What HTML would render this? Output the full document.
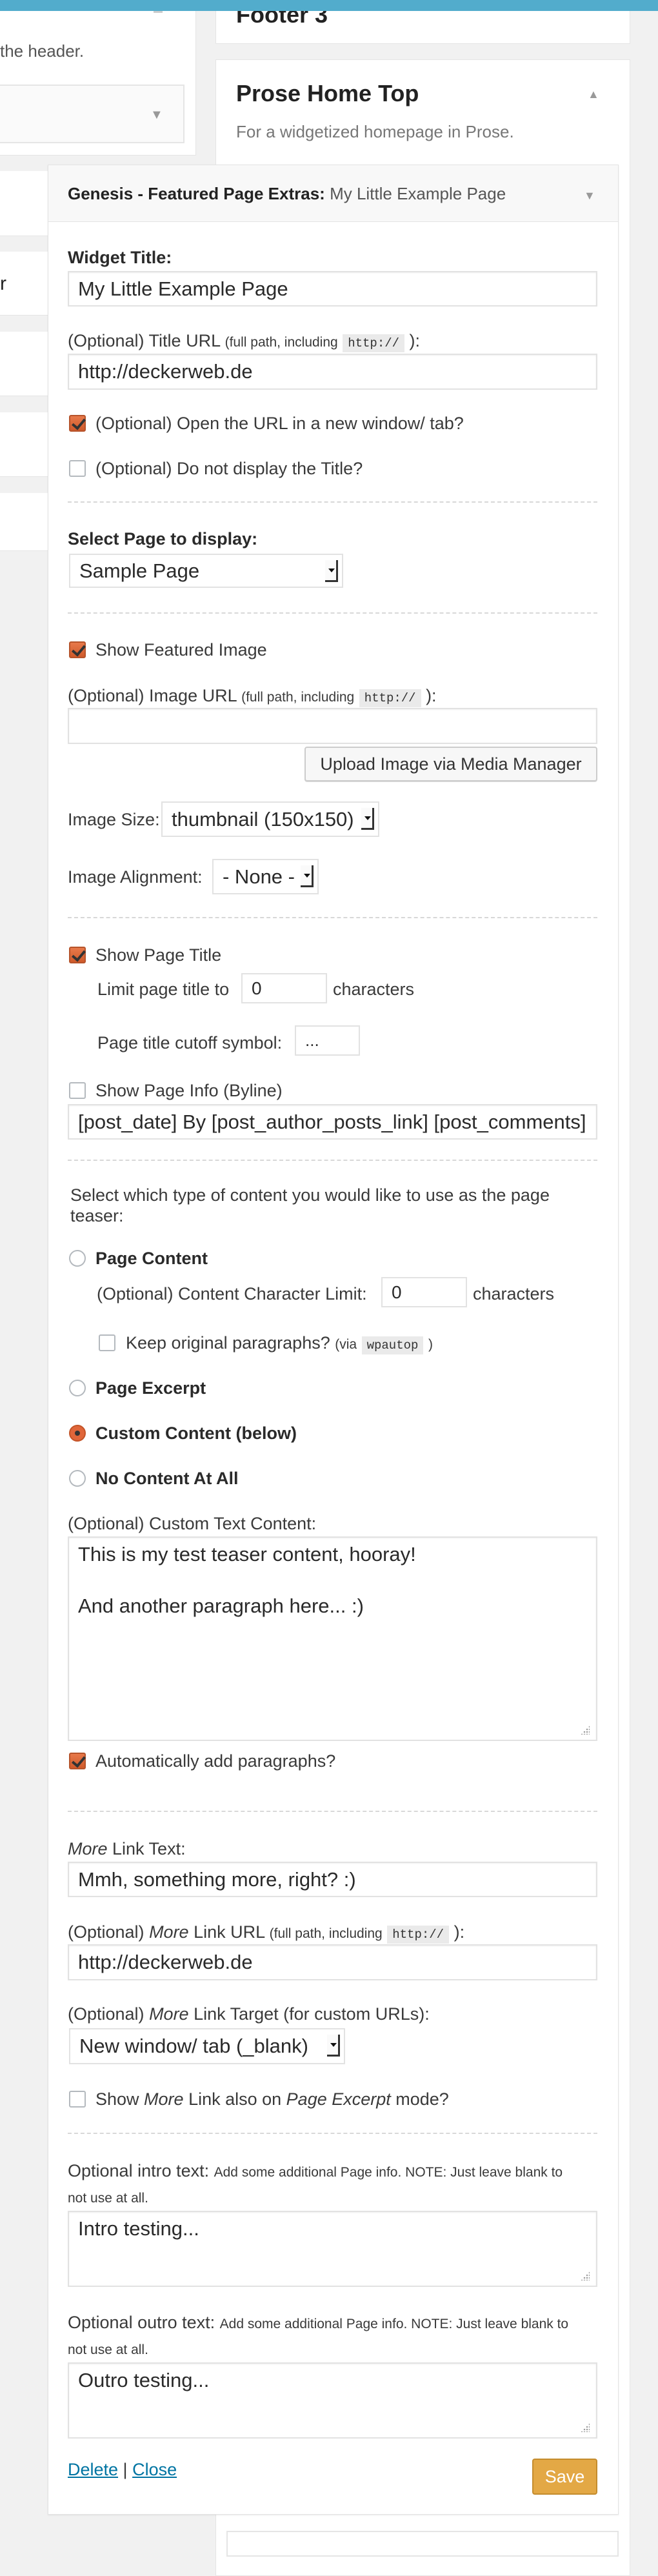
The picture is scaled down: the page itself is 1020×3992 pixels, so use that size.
<!DOCTYPE html>
<html><head><meta charset="utf-8"><style>
*{margin:0;padding:0;box-sizing:border-box}
body{width:1020px;height:3935px;background:#f1f1f1;position:relative;overflow:hidden;font-family:"Liberation Sans",Arial,sans-serif;color:#3a3a3a}
.a{position:absolute}
.t{position:absolute;font-size:27px;line-height:40px;white-space:nowrap;color:#3a3a3a}
.b{font-weight:bold;color:#2a2a2a}
.sm{font-size:21px}
code{font-family:"Liberation Mono",monospace;font-size:19px;background:#eaeaea;padding:3px 8px;color:#333}
.in{position:absolute;left:105px;width:821px;background:#fff;border:2px solid #e2e2e2;box-shadow:inset 0 1px 2px rgba(0,0,0,.07);font-size:31px;color:#2a2a2a;padding-left:14px;display:flex;align-items:center;white-space:nowrap;overflow:hidden}
.ta{align-items:flex-start;line-height:40px;padding-top:6px;display:block}
.sel{position:absolute;background:#fff;border:2px solid #e2e2e2;font-size:31px;color:#2a2a2a;padding-left:14px;display:flex;align-items:center;white-space:nowrap}
.arr{position:absolute;right:6px;top:8px;width:20px;height:34px;border-right:3px solid #333;border-bottom:3px solid #333;background:#fafafa}
.arr:after{content:"";position:absolute;left:5px;top:13px;border-left:5px solid transparent;border-right:5px solid transparent;border-top:6px solid #111}
.cb{position:absolute;left:107px;width:26px;height:26px;border:2px solid #b4b9be;border-radius:3px;background:#fff}
.cbk{background:linear-gradient(#e8794a,#cf5a2b);border-color:#b6532a}
.cbk:after{content:"";position:absolute;left:7px;top:0px;width:8px;height:16px;border-right:4px solid #333;border-bottom:4px solid #333;transform:rotate(40deg)}
.rd{position:absolute;left:107px;width:26px;height:26px;border:2px solid #b4b9be;border-radius:50%;background:#fff}
.rdk{background:#e0663a;border-color:#c45428}
.rdk:after{content:"";position:absolute;left:7px;top:7px;width:8px;height:8px;border-radius:50%;background:#333}
.dash{position:absolute;left:105px;width:821px;height:0;border-top:2px dashed #d8d8d8}
.grip{position:absolute;right:10px;bottom:8px;width:14px;height:14px;background:radial-gradient(circle,#999 1px,transparent 1.5px) 0 0/4px 4px;clip-path:polygon(100% 0,100% 100%,0 100%)}
</style></head><body>

<!-- left column -->
<div class="a" style="left:0;top:0;width:304px;height:241px;background:#fff;border-right:1px solid #e5e5e5;border-bottom:1px solid #e5e5e5"></div>
<div class="a" style="left:238px;top:6px;width:14px;height:14px;background:#ccc"></div>
<div class="t" style="left:0;top:59px;font-size:26px;color:#555">the header.</div>
<div class="a" style="left:-2px;top:131px;width:288px;height:91px;background:#fafafa;border:2px solid #e5e5e5"></div>
<div class="t" style="left:233px;top:158px;font-size:20px;color:#999">▼</div>
<div class="a" style="left:0;top:265px;width:80px;height:101px;background:#fff;border-bottom:1px solid #e5e5e5"></div>
<div class="a" style="left:0;top:390px;width:80px;height:99px;background:#fff;border-bottom:1px solid #e5e5e5"></div>
<div class="t" style="left:0;top:420px;font-size:30px;color:#222">r</div>
<div class="a" style="left:0;top:514px;width:80px;height:100px;background:#fff;border-bottom:1px solid #e5e5e5"></div>
<div class="a" style="left:0;top:639px;width:80px;height:100px;background:#fff;border-bottom:1px solid #e5e5e5"></div>
<div class="a" style="left:0;top:764px;width:80px;height:90px;background:#fff;border-bottom:1px solid #e5e5e5"></div>

<!-- right column -->
<div class="a" style="left:334px;top:0;width:643px;height:68px;background:#fff;border:1px solid #e5e5e5"></div>
<div class="t b" style="left:366px;top:3px;font-size:36px;color:#222">Footer 3</div>
<div class="a" style="left:334px;top:92px;width:643px;height:3900px;background:#fff;border:1px solid #e5e5e5"></div>
<div class="t b" style="left:366px;top:122px;font-size:36px;line-height:46px;color:#222">Prose Home Top</div>
<div class="t" style="left:911px;top:126px;font-size:18px;color:#999">▲</div>
<div class="t" style="left:366px;top:184px;font-size:26px;color:#777">For a widgetized homepage in Prose.</div>
<div class="a" style="left:351px;top:3922px;width:608px;height:40px;background:#fff;border:2px solid #e5e5e5"></div>

<div class="a" style="left:0;top:0;width:1020px;height:17px;background:#52accc"></div>

<!-- panel -->
<div class="a" style="left:74px;top:255px;width:885px;height:3642px;background:#fff;border:1px solid #e3e3e3;box-shadow:0 1px 2px rgba(0,0,0,.08)"></div>
<div class="a" style="left:74px;top:255px;width:885px;height:89px;background:#f8f8f8;border:1px solid #e3e3e3"></div>
<div class="t" style="left:105px;top:280px;font-size:26px;color:#222"><b>Genesis - Featured Page Extras:</b> <span style="color:#555">My Little Example Page</span></div>
<div class="t" style="left:905px;top:283px;font-size:18px;color:#999">▼</div>

<div class="t b" style="left:105px;top:379px">Widget Title:</div>
<div class="in" style="top:420px;height:55px">My Little Example Page</div>
<div class="t" style="left:105px;top:508px">(Optional) Title URL <span class="sm">(full path, including</span> <code>http://</code> ):</div>
<div class="in" style="top:548px;height:56px">http://deckerweb.de</div>
<div class="cb cbk" style="top:643px"></div><div class="t" style="left:148px;top:636px">(Optional) Open the URL in a new window/ tab?</div>
<div class="cb" style="top:713px"></div><div class="t" style="left:148px;top:706px">(Optional) Do not display the Title?</div>
<div class="dash" style="top:777px"></div>

<div class="t b" style="left:105px;top:815px">Select Page to display:</div>
<div class="sel" style="left:107px;top:858px;width:425px;height:53px">Sample Page<span class="arr"></span></div>
<div class="dash" style="top:949px"></div>

<div class="cb cbk" style="top:994px"></div><div class="t" style="left:148px;top:987px">Show Featured Image</div>
<div class="t" style="left:105px;top:1058px">(Optional) Image URL <span class="sm">(full path, including</span> <code>http://</code> ):</div>
<div class="in" style="top:1097px;height:56px"></div>
<div class="a" style="left:472px;top:1157px;width:454px;height:54px;background:#f7f7f7;border:2px solid #ccc;border-radius:4px;box-shadow:0 1px 0 #ddd;font-size:27px;line-height:50px;text-align:center;color:#333">Upload Image via Media Manager</div>

<div class="t" style="left:105px;top:1250px">Image Size:</div>
<div class="sel" style="left:250px;top:1242px;width:338px;height:55px">thumbnail (150x150)<span class="arr"></span></div>
<div class="t" style="left:105px;top:1339px">Image Alignment:</div>
<div class="sel" style="left:329px;top:1331px;width:165px;height:55px">- None -<span class="arr"></span></div>
<div class="dash" style="top:1421px"></div>

<div class="cb cbk" style="top:1467px"></div><div class="t" style="left:148px;top:1460px">Show Page Title</div>
<div class="t" style="left:151px;top:1513px">Limit page title to</div>
<div class="sel" style="left:374px;top:1508px;width:133px;height:47px;font-size:28px">0</div>
<div class="t" style="left:516px;top:1513px">characters</div>
<div class="t" style="left:151px;top:1596px">Page title cutoff symbol:</div>
<div class="sel" style="left:457px;top:1589px;width:101px;height:47px;font-size:26px">...</div>
<div class="cb" style="top:1677px"></div><div class="t" style="left:148px;top:1670px">Show Page Info (Byline)</div>
<div class="in" style="top:1711px;height:55px">[post_date] By [post_author_posts_link] [post_comments]</div>
<div class="dash" style="top:1797px"></div>

<div class="t" style="left:109px;top:1832px">Select which type of content you would like to use as the page</div>
<div class="t" style="left:109px;top:1864px">teaser:</div>
<div class="rd" style="top:1937px"></div><div class="t b" style="left:148px;top:1930px">Page Content</div>
<div class="t" style="left:150px;top:1985px">(Optional) Content Character Limit:</div>
<div class="sel" style="left:591px;top:1979px;width:133px;height:47px;font-size:28px">0</div>
<div class="t" style="left:733px;top:1985px">characters</div>
<div class="cb" style="left:153px;top:2068px"></div><div class="t" style="left:195px;top:2061px">Keep original paragraphs? <span class="sm">(via</span> <code>wpautop</code> <span class="sm">)</span></div>
<div class="rd" style="top:2138px"></div><div class="t b" style="left:148px;top:2131px">Page Excerpt</div>
<div class="rd rdk" style="top:2208px"></div><div class="t b" style="left:148px;top:2201px">Custom Content (below)</div>
<div class="rd" style="top:2278px"></div><div class="t b" style="left:148px;top:2271px">No Content At All</div>
<div class="t" style="left:105px;top:2341px">(Optional) Custom Text Content:</div>
<div class="in ta" style="top:2381px;height:317px">This is my test teaser content, hooray!<br><br>And another paragraph here... :)<span class="grip"></span></div>
<div class="cb cbk" style="top:2716px"></div><div class="t" style="left:148px;top:2709px">Automatically add paragraphs?</div>
<div class="dash" style="top:2806px"></div>

<div class="t" style="left:105px;top:2845px"><i>More</i> Link Text:</div>
<div class="in" style="top:2885px;height:55px">Mmh, something more, right? :)</div>
<div class="t" style="left:105px;top:2974px">(Optional) <i>More</i> Link URL <span class="sm">(full path, including</span> <code>http://</code> ):</div>
<div class="in" style="top:3013px;height:56px">http://deckerweb.de</div>
<div class="t" style="left:105px;top:3101px">(Optional) <i>More</i> Link Target (for custom URLs):</div>
<div class="sel" style="left:107px;top:3143px;width:428px;height:56px">New window/ tab (_blank)<span class="arr"></span></div>
<div class="cb" style="top:3240px"></div><div class="t" style="left:148px;top:3233px">Show <i>More</i> Link also on <i>Page Excerpt</i> mode?</div>
<div class="dash" style="top:3305px"></div>

<div class="t" style="left:105px;top:3344px">Optional intro text: <span class="sm">Add some additional Page info. NOTE: Just leave blank to</span></div>
<div class="t sm" style="left:105px;top:3387px">not use at all.</div>
<div class="in ta" style="top:3426px;height:118px">Intro testing...<span class="grip"></span></div>
<div class="t" style="left:105px;top:3579px">Optional outro text: <span class="sm">Add some additional Page info. NOTE: Just leave blank to</span></div>
<div class="t sm" style="left:105px;top:3622px">not use at all.</div>
<div class="in ta" style="top:3661px;height:118px">Outro testing...<span class="grip"></span></div>

<div class="t" style="left:105px;top:3807px"><span style="color:#0074a2;text-decoration:underline">Delete</span> | <span style="color:#0074a2;text-decoration:underline">Close</span></div>
<div class="a" style="left:825px;top:3810px;width:101px;height:56px;background:#e3a845;border:2px solid #c48c2e;border-radius:4px;color:#fff;font-size:27px;line-height:52px;text-align:center">Save</div>

</body></html>
